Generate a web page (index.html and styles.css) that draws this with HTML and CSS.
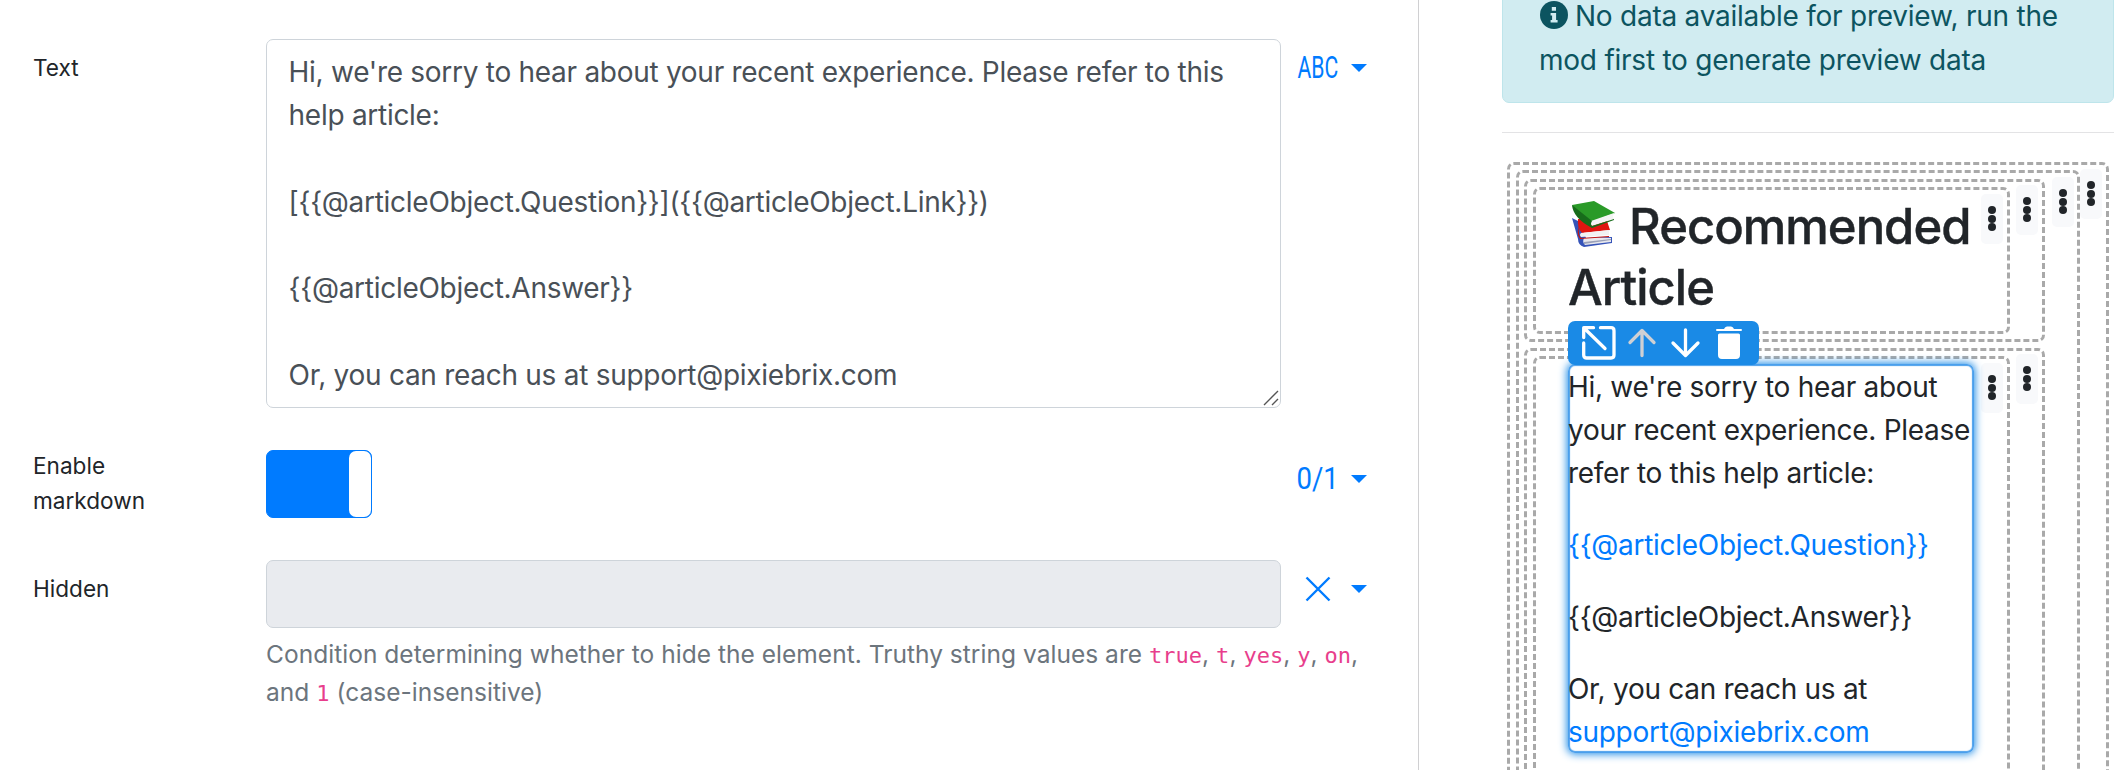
FILE: index.html
```html
<!DOCTYPE html>
<html lang="en">
<head>
    <meta charset="UTF-8">
    <meta name="viewport" content="width=device-width, initial-scale=1.0">
    <title>Page Editor</title>
    <link rel="stylesheet" href="styles.css">
</head>
<body>
    <main class="editor">
        <section class="config">
            <div class="field">
                <label class="label" for="text">Text</label>
                <div class="control">
                    <textarea class="input text-input" id="text" spellcheck="false">Hi, we're sorry to hear about your recent experience. Please refer to this help article:

[{{@articleObject.Question}}]({{@articleObject.Link}})

{{@articleObject.Answer}}

Or, you can reach us at support@pixiebrix.com</textarea>
                    <svg class="grip" viewBox="0 0 16 16"><path d="M1 15L15 1M9 15l6-6"/></svg>
                </div>
                <div class="mode"><span class="mode-icon"><span class="narrow abc">ABC</span></span><span class="caret"></span></div>
            </div>
            <div class="field markdown">
                <span class="label">Enable<br>markdown</span>
                <div class="control"><div class="toggle"><span class="handle"></span></div></div>
                <div class="mode"><span class="mode-icon"><span class="narrow bool">0/1</span></span><span class="caret"></span></div>
            </div>
            <div class="field hidden-field">
                <label class="label" for="hidden">Hidden</label>
                <input class="input disabled" id="hidden" type="text" disabled>
                <div class="mode">
                    <span class="mode-icon">
                        <svg class="cross" viewBox="0 0 26 26"><path d="M1.5 1.5l23 23M24.5 1.5l-23 23"/></svg>
                    </span>
                    <span class="caret"></span>
                </div>
            </div>
            <p class="help">Condition determining whether to hide the element. Truthy string values are <code>true</code>, <code>t</code>, <code>yes</code>, <code>y</code>, <code>on</code>,<br>and <code>1</code> (case-insensitive)</p>
        </section>

        <aside class="preview">
            <div class="alert">
                <svg class="info-icon" viewBox="0 0 28 28"><circle cx="14" cy="14" r="14"/><path d="M11.8 6H16v3.800h-4.200zM10.600 12h5.500v7h1.500v2.600h-7V19h1.500v-4.400h-1.500z"/></svg>
                <span>No data available for preview, run the<br>mod first to generate preview data</span>
            </div>
            <hr>

            <!-- nested element outlines: container > row > column > element -->
            <div class="box container-box">
                <div class="box row-box">
                    <div class="columns">
                        <div class="box column-box">
                            <div class="box element-box">
                                <h1><svg class="books" viewBox="0 0 44 46"><path fill="#3553b8" d="M1 17l8 4 6 16 26-1v6L13 46Q7 44 7 38z"/><path fill="#e8e8ee" d="M13 37l27 0v4l-26 3q-3-3-1-7z"/><path fill="#9aa0b8" d="M13 41l27-3v1l-27 4z"/><path fill="#e01510" d="M7 18l28-1 4 12-28 3q-5-5-4-14z"/><path fill="#f2f2f2" d="M10 32l28-3v5l-28 2q-2-2 0-4z"/><path fill="#c41510" d="M8 25q-1 9 2 12l28-2v1l-29 2Q5 33 8 25z"/><path fill="#2a9a28" d="M1 4L23 0l21 12-24 9Q4 13 1 4z"/><path fill="#f4f4f4" d="M20 20l23-8q-2 4 0 6l-22 7q-3-3-1-5z"/><path fill="#176c1b" d="M1 4l20 16q-2 3 0 5l22-7v1l-22 8Q2 17 1 4z"/></svg> Recommended<br>Article</h1>
                                <div class="kebab"><i></i><i></i><i></i></div>
                            </div>
                            <div class="kebab"><i></i><i></i><i></i></div>
                        </div>
                        <div class="box column-box second">
                            <div class="box element-box">
                                <div class="selected">
                                    <div class="toolbar">
                                        <svg viewBox="0 0 34 34"><path d="M11.500 1.700H1.700V11.500M18.500 1.700H29q3 0 3 3V29q0 3-3 3H4.700q-3 0-3-3V17M2.500 2.500L23 22.500"/></svg>
                                        <svg class="muted" viewBox="0 0 34 34"><path d="M17 29.500V5M5 16.500L17 4.500l12 12"/></svg>
                                        <svg viewBox="0 0 34 34"><path d="M16.500 4v25M4 17l12.500 12.500L29 17"/></svg>
                                        <svg viewBox="0 0 34 34"><path class="solid" d="M5 3h7q1-2.500 3-2.500h4q2 0 3 2.500h7q1 0 1 1t-1 1H5q-1 0-1-1t1-1zM6 9q0-1.500 1.500-1.500h19Q28 7.500 28 9v20q0 4-4 4H10q-4 0-4-4z"/></svg>
                                    </div>
                                    <p>Hi, we're sorry to hear about<br>your recent experience. Please<br>refer to this help article:</p>
                                    <p><a href="#">{{@articleObject.Question}}</a></p>
                                    <p>{{@articleObject.Answer}}</p>
                                    <p>Or, you can reach us at<br><a href="#">support@pixiebrix.com</a></p>
                                </div>
                                <div class="kebab"><i></i><i></i><i></i></div>
                            </div>
                            <div class="kebab"><i></i><i></i><i></i></div>
                        </div>
                    </div>
                    <div class="kebab"><i></i><i></i><i></i></div>
                </div>
                <div class="kebab"><i></i><i></i><i></i></div>
            </div>
        </aside>
    </main>
</body>
</html>
```
FILE: styles.css
```css
* {
    box-sizing: border-box;
}

body {
    margin: 0;
    font-family: Inter, sans-serif;
    font-size: 28px;
    line-height: 43.2px;
    color: #212529;
    background: #fff;
}

.editor {
    display: flex;
    height: 770px;
    overflow: hidden;
}

.config {
    width: 1419px;
    flex: none;
    padding: 39px 0 0 33px;
    border-right: 1px solid #d0d0d2;
}

.field {
    display: flex;
    align-items: flex-start;
}

.label {
    width: 233px;
    flex: none;
    padding-top: 11px;
    font-size: 22.6px;
    line-height: 35px;
}

.input {
    width: 1015px;
    margin: 0;
    border: 1px solid #ced4da;
    border-radius: 7px;
    font: inherit;
    color: #495057;
}

.text-input {
    display: block;
    height: 369px;
    padding: 11.2px 21.6px 10px;
    letter-spacing: -0.28px;
    overflow: hidden;
    resize: none;
}

.control {
    position: relative;
    width: 1015px;
}

.grip {
    position: absolute;
    right: 2px;
    bottom: 2px;
    width: 16px;
    height: 16px;
    fill: none;
    stroke: #555;
    stroke-width: 1.4;
}

.mode {
    display: flex;
    align-items: center;
    height: 58px;
    margin-left: 16px;
    color: #007bff;
}

.mode-icon {
    display: flex;
    align-items: center;
    justify-content: center;
    width: 41px;
    margin-right: 13px;
}

/* condensed type for the input mode switch */
.narrow {
    font-family: Roboto, sans-serif;
    font-size: 32px;
    transform: scaleX(0.66);
}

.bool {
    transform: scaleX(0.86);
}

.caret {
    border-top: 8.5px solid #007bff;
    border-left: 8px solid transparent;
    border-right: 8px solid transparent;
}

.cross {
    width: 26px;
    height: 26px;
    fill: none;
    stroke: #007bff;
    stroke-width: 2.4;
}

.markdown {
    margin-top: 42px;
}

.markdown .label {
    margin-top: -2px;
    padding-top: 0;
}

.toggle {
    display: flex;
    justify-content: flex-end;
    width: 106px;
    height: 68px;
    border: 1px solid #007bff;
    border-radius: 7px;
    background: #007bff;
}

.handle {
    width: 22px;
    border-radius: 7px;
    background: #fff;
}

.hidden-field {
    margin-top: 42px;
}

.disabled {
    height: 68px;
    background: #e9ebef;
}

.help {
    margin: 8px 0 0 233px;
    font-size: 24.5px;
    line-height: 37.8px;
    letter-spacing: 0.03px;
    color: #6c757d;
}

.help code {
    font-family: "DejaVu Sans Mono", monospace;
    font-size: 22px;
    line-height: 1;
    color: #e83e8c;
}

.preview {
    flex: 1;
    padding-left: 83px;
}

.alert {
    display: flex;
    align-items: flex-start;
    height: 113px;
    margin-top: -10px;
    padding-left: 37px;
    border: 1px solid #bee5eb;
    border-radius: 7px;
    background: #d1ecf1;
    color: #0c5460;
    letter-spacing: -0.24px;
}

.alert span {
    margin: 4px 0 0 -29px;
    text-indent: 36px;
    line-height: 43.8px;
}

.info-icon {
    width: 28px;
    height: 28px;
    flex: none;
    margin-top: 10px;
    fill: #0c5460;
}

.info-icon path {
    fill: #d1ecf1;
}

hr {
    height: 1px;
    margin: 29px 0 29px;
    border: 0;
    background: #e3e3e5;
}

.box {
    display: flex;
    align-items: flex-start;
    border: 3px dashed #a9a9a9;
    border-radius: 7px;
}

.container-box {
    width: 602px;
    height: 700px;
    margin-left: 5px;
    padding: 4px 4px 0 6px;
}

.row-box {
    width: 564px;
    height: 690px;
    margin-top: 1px;
    padding: 4px 3px 0 5px;
}

.columns {
    flex: 1;
    margin: 2px 7px 0 0;
}

.column-box {
    justify-content: space-between;
    height: 163px;
    padding: 3px 4px 0 6px;
}

.column-box.second {
    height: 500px;
    margin-top: 6px;
}

.element-box {
    justify-content: space-between;
    width: 477px;
    height: 147px;
    margin-top: 2px;
    padding: 4px 4px 0 32px;
}

.second .element-box {
    height: 490px;
}

h1 {
    width: 406px;
    margin: 3px 0 0;
    font-size: 49px;
    font-weight: 500;
    line-height: 60.5px;
    letter-spacing: -1px;
    white-space: nowrap;
    -webkit-text-stroke: 0.4px #212529;
}

.books {
    width: 44px;
    height: 46px;
    margin: 0 2px -3px 3px;
}

.kebab {
    display: flex;
    flex-direction: column;
    align-items: center;
    gap: 0.5px;
    flex: none;
    width: 22px;
    height: 50px;
    padding-top: 12px;
    border-radius: 5px;
    background: #f8f9fb;
}

.kebab i {
    width: 8px;
    height: 8px;
    border-radius: 50%;
    background: #212529;
}

.selected {
    position: relative;
    width: 406px;
    height: 389px;
    margin-top: 1px;
    padding-top: 1.7px;
    border-radius: 7px;
    box-shadow: 0 0 8px 1px #1a8ae6, inset 0 0 1px 2px #4a9fec;
    letter-spacing: -0.29px;
    white-space: nowrap;
}

.selected p {
    margin: 0 0 28.8px;
}

.selected a {
    color: #007bff;
    text-decoration: none;
}

.toolbar {
    position: absolute;
    top: -43px;
    left: 0;
    display: flex;
    align-items: center;
    gap: 9.3px;
    width: 191px;
    height: 44px;
    padding-left: 14px;
    border-radius: 7px;
    background: #1a8ae6;
}

.toolbar svg {
    width: 34px;
    height: 34px;
    fill: none;
    stroke: #fff;
    stroke-width: 3.3;
    stroke-linecap: round;
    stroke-linejoin: round;
}

.toolbar .muted {
    stroke: #ced0d4;
}

.toolbar .solid {
    fill: #fff;
    stroke: none;
}
```
